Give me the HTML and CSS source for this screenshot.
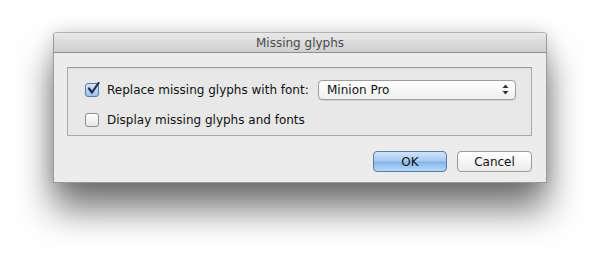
FILE: index.html
```html
<!DOCTYPE html>
<html>
<head>
<meta charset="utf-8">
<link rel="stylesheet" href="styles.css">
</head>
<body>
<div class="window">
  <div class="titlebar">Missing glyphs</div>
  <div class="content">
    <div class="group">
      <div class="row row1">
        <span class="check checked">
          <svg width="14" height="14" viewBox="0 0 14 14"><path d="M3 6.5 L6 10.5 L12.5 1" fill="none" stroke="#1d2c4a" stroke-width="2.2" stroke-linecap="round" stroke-linejoin="round"/></svg>
        </span>
        <span class="label">Replace missing glyphs with font:</span>
        <div class="popup">
          <span>Minion Pro</span>
          <svg class="arrows" width="7" height="11" viewBox="0 0 7 11"><path d="M3.5 0.5 L6.5 4 L0.5 4 Z M3.5 10.5 L6.5 7 L0.5 7 Z" fill="#333"/></svg>
        </div>
      </div>
      <div class="row row2">
        <span class="check"></span>
        <span class="label">Display missing glyphs and fonts</span>
      </div>
    </div>
    <div class="buttons">
      <button class="btn default">OK</button>
      <button class="btn">Cancel</button>
    </div>
  </div>
</div>
</body>
</html>
```
FILE: styles.css
```css
html, body { margin: 0; padding: 0; background: #ffffff; }
body {
  width: 600px; height: 258px; overflow: hidden;
  padding: 32px 0 0 53px; box-sizing: border-box;
  font-family: "DejaVu Sans", "Liberation Sans", sans-serif;
  font-size: 12px; color: #111;
}
.window {
  width: 494px; height: 151px; box-sizing: border-box;
  background: #ececec;
  border: 1px solid #9a9a9a;
  border-top-color: #b0b0b0;
  border-radius: 4px 4px 0 0;
  box-shadow: 0 26px 36px rgba(0,0,0,0.55), 0 0 18px rgba(0,0,0,0.15);
  display: flex; flex-direction: column;
}
.titlebar {
  height: 20px; box-sizing: border-box;
  background: linear-gradient(#e9e9e9, #cfcfcf);
  border-bottom: 1px solid #8f8f8f;
  border-radius: 3px 3px 0 0;
  text-align: center; line-height: 20px;
  color: #4a4a4a; font-size: 12px;
}
.content { padding: 14px 14px 0 13px; display: flex; flex-direction: column; }
.group {
  height: 69px; box-sizing: border-box;
  border: 1px solid #a8a8a8;
  border-top-color: #9c9c9c;
  background: #e8e8e8;
  box-shadow: inset 0 1px 0 #dcdcdc;
  padding: 11px 0 0 17px;
}
.row { display: flex; align-items: center; }
.row1 { height: 21px; }
.row2 { height: 14px; margin-top: 13px; }
.check {
  width: 14px; height: 14px; box-sizing: border-box;
  border: 1px solid #8e8e8e; border-radius: 3px;
  background: linear-gradient(#ffffff, #e6e6e6);
  position: relative; flex: none;
}
.check.checked {
  border-color: #5c7ba6;
  background: linear-gradient(#d6e6f8, #9fc0e9);
}
.check svg { position: absolute; left: 0; top: -2px; }
.label { margin-left: 8px; white-space: nowrap; }
.popup {
  margin-left: auto; margin-right: 15px;
  width: 198px; height: 20px; box-sizing: border-box;
  border: 1px solid #9d9d9d; border-radius: 4px;
  background: linear-gradient(#ffffff, #f0f0f0);
  box-shadow: 0 1px 0 rgba(0,0,0,0.08);
  display: flex; align-items: center; justify-content: space-between;
  padding: 0 6px 0 8px;
}
.arrows { flex: none; }
.buttons { display: flex; justify-content: flex-end; gap: 10px; margin-top: 15px; }
.btn {
  height: 21px; box-sizing: border-box; margin: 0;
  font-family: inherit; font-size: 12px; color: #111;
  border: 1px solid #9a9a9a; border-radius: 4px;
  background: linear-gradient(#ffffff, #ececec);
  padding: 0;
}
.btn.default {
  width: 74px;
  border-color: #5a7ba8;
  background: linear-gradient(#d0e4f8 0%, #a7cbef 45%, #86b6ea 55%, #b7d8f7 100%);
}
.btn:not(.default) { width: 75px; }
```
